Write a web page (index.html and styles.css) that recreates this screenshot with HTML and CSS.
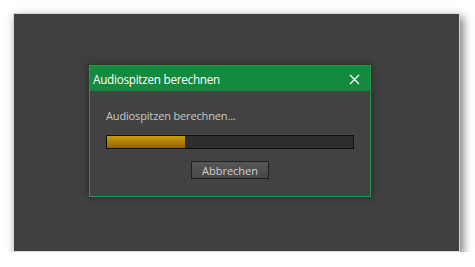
FILE: index.html
```html
<!DOCTYPE html>
<html>
<head>
<meta charset="utf-8">
<link rel="stylesheet" href="styles.css">
</head>
<body>
<div class="panel">
  <div class="dialog">
    <div class="titlebar">
      <span class="title">Audiospitzen berechnen</span>
      <svg class="close" width="11" height="11" viewBox="0 0 11 11"><path d="M1 1 L10 10 M10 1 L1 10" stroke="#ffffff" stroke-width="1.3" fill="none"/></svg>
    </div>
    <div class="body">
      <div class="label">Audiospitzen berechnen...</div>
      <div class="bar"><div class="fill" style="width:78px"></div></div>
      <div class="actions"><button class="btn">Abbrechen</button></div>
    </div>
  </div>
</div>
</body>
</html>
```
FILE: styles.css
```css
html, body { margin: 0; padding: 0; background: #ffffff; }
body { font-family: "Open Sans", "Noto Sans", sans-serif; }
.panel {
  margin: 13px 0 0 13px;
  width: 447px;
  height: 239px;
  box-sizing: border-box;
  border: 1px solid #d8d8d8;
  background: #404040;
  box-shadow: 3px 4px 9px rgba(0,0,0,0.55);
  padding: 51px 0 0 75px;
}
.dialog {
  width: 282px;
  height: 132px;
  box-sizing: border-box;
  border: 1px solid #1e9a48;
  background: #424242;
  box-shadow: 0 0 8px rgba(0,0,0,0.45);
  display: flex;
  flex-direction: column;
}
.titlebar {
  height: 25px;
  background: #138a3e;
  display: flex;
  align-items: center;
  justify-content: space-between;
  padding: 0 10px 0 3px;
}
.title { color: #ffffff; font-size: 11.7px; letter-spacing: -0.25px; }
.close { display: block; margin-top: 1px; }
.body { padding: 17px 16px 0 16px; }
.label { color: #c8c8c8; font-size: 11px; height: 16px; line-height: 16px; letter-spacing: -0.15px; }
.bar {
  margin-top: 11px;
  height: 14px;
  box-sizing: border-box;
  border: 1px solid #101010;
  background: #2e2e2e;
  width: 248px;
}
.fill { height: 100%; background: linear-gradient(#c99a0c, #8e6602); }
.actions { display: flex; padding-left: 85px; margin-top: 12px; }
.btn {
  width: 78px;
  height: 18px;
  box-sizing: border-box;
  border: 1px solid #202020;
  background: linear-gradient(#555555, #474747);
  color: #cfcfcf;
  font-family: "Open Sans", "Noto Sans", sans-serif;
  font-size: 11px;
  padding: 0;
  line-height: 15px;
}
```
